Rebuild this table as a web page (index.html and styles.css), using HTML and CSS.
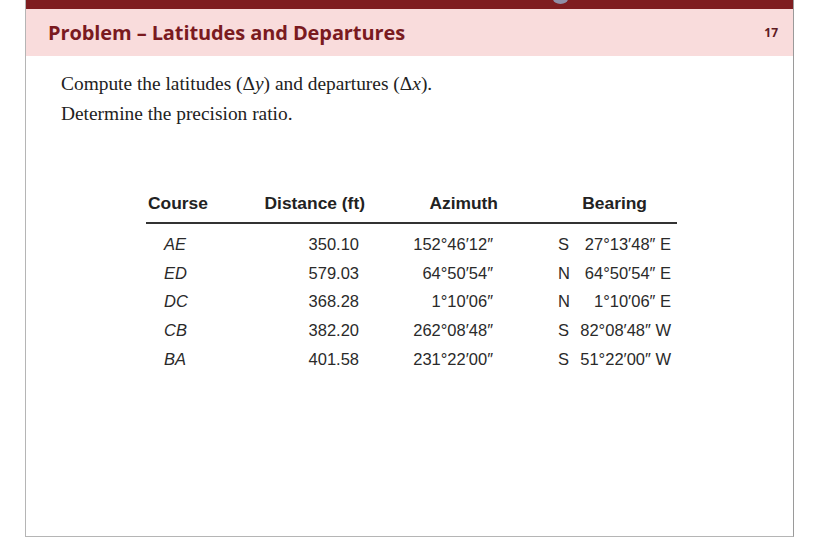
FILE: index.html
```html
<!DOCTYPE html>
<html>
<head>
<meta charset="utf-8">
<link rel="stylesheet" href="styles.css">
</head>
<body>
<div class="slide">
  <div class="topbar"><span class="knob"></span></div>
  <div class="header">
    <h1 class="title">Problem – Latitudes and Departures</h1>
    <span class="pagenum">17</span>
  </div>
  <div class="content">
    <p class="line">Compute the latitudes (<span class="math">Δ<i>y</i></span>) and departures (<span class="math">Δ<i>x</i></span>).</p>
    <p class="line">Determine the precision ratio.</p>
    <div class="table">
      <div class="th c1">Course</div>
      <div class="th c2">Distance (ft)</div>
      <div class="th c3">Azimuth</div>
      <div class="th c4">Bearing</div>

      <div class="td c1 first">AE</div>
      <div class="td c2 first">350.10</div>
      <div class="td c3 first">152°46′12″</div>
      <div class="td c4 first"><span>S</span><span>27°13′48″ E</span></div>

      <div class="td c1">ED</div>
      <div class="td c2">579.03</div>
      <div class="td c3">64°50′54″</div>
      <div class="td c4"><span>N</span><span>64°50′54″ E</span></div>

      <div class="td c1">DC</div>
      <div class="td c2">368.28</div>
      <div class="td c3">1°10′06″</div>
      <div class="td c4"><span>N</span><span>1°10′06″ E</span></div>

      <div class="td c1">CB</div>
      <div class="td c2">382.20</div>
      <div class="td c3">262°08′48″</div>
      <div class="td c4"><span>S</span><span>82°08′48″ W</span></div>

      <div class="td c1">BA</div>
      <div class="td c2">401.58</div>
      <div class="td c3">231°22′00″</div>
      <div class="td c4"><span>S</span><span>51°22′00″ W</span></div>
    </div>
  </div>
</div>
</body>
</html>
```
FILE: styles.css
```css
html, body {
  margin: 0;
  padding: 0;
  background: #ffffff;
}
.slide {
  margin-left: 25px;
  width: 769px;
  height: 537px;
  border-left: 1px solid #b5b5b5;
  border-right: 1px solid #9a9a9a;
  border-bottom: 1px solid #b5b5b5;
  box-sizing: border-box;
  overflow: hidden;
}
.topbar {
  position: relative;
  height: 9px;
  background: #7f1d20;
  margin-left: -1px;
  margin-right: -1px;
}
.knob {
  position: absolute;
  left: 528px;
  top: -6px;
  width: 15px;
  height: 10px;
  border-radius: 50%;
  background: #8f8ea6;
}
.header {
  height: 47px;
  background: #f9dcdc;
  display: flex;
  align-items: center;
  justify-content: space-between;
  padding: 0 16px 0 23px;
  margin-left: -1px;
  margin-right: -1px;
}
.title {
  margin: 0;
  font-family: "Open Sans", sans-serif;
  font-weight: 700;
  font-size: 20px;
  color: #7a1a1f;
  letter-spacing: -0.1px;
}
.pagenum {
  font-family: "Open Sans", sans-serif;
  font-weight: 700;
  font-size: 12px;
  color: #5e1a22;
}
.content {
  padding: 13px 0 0 35px;
}
.line {
  margin: 0;
  font-family: "Liberation Serif", serif;
  font-size: 19.4px;
  line-height: 30px;
  color: #222222;
}
.math i {
  font-style: italic;
}
.table {
  margin: 63px 0 0 85px;
  width: 531px;
  display: grid;
  grid-template-columns: 110px 120px 135px 166px;
  font-family: "Liberation Sans", sans-serif;
  color: #2a2a2a;
}
.th {
  font-size: 17.4px;
  font-weight: 700;
  line-height: 22px;
  padding-bottom: 8px;
  border-bottom: 2px solid #333333;
  text-align: right;
  color: #222222;
}
.th.c1 { text-align: left; padding-left: 2px; }
.th.c2 { padding-right: 11px; }
.th.c3 { padding-right: 13px; }
.th.c4 { padding-right: 30px; }
.td {
  font-size: 16.5px;
  line-height: 28.7px;
  text-align: right;
}
.td.first { padding-top: 6px; }
.td.c1 { text-align: left; padding-left: 18px; font-style: italic; }
.td.c2 { padding-right: 17px; }
.td.c3 { padding-right: 18px; }
.td.c4 {
  display: flex;
  justify-content: space-between;
  padding-left: 47px;
  padding-right: 6px;
}
```
